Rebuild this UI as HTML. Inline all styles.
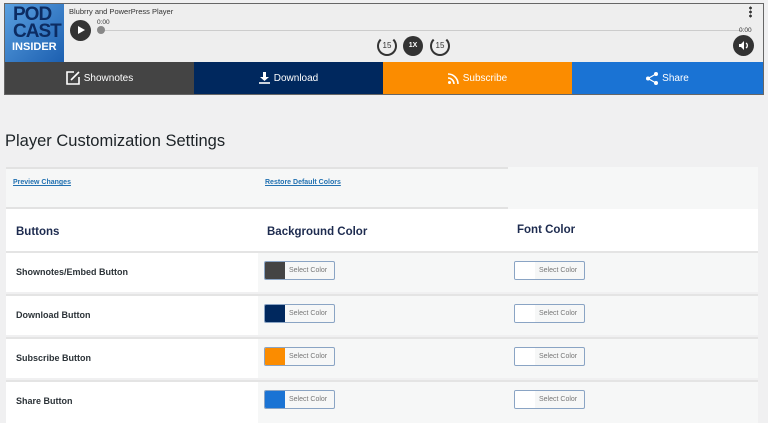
<!DOCTYPE html>
<html><head><meta charset="utf-8"><style>
*{margin:0;padding:0;box-sizing:border-box}
body{width:768px;height:421px;overflow:hidden;background:#f0f0f1;font-family:"Liberation Sans",sans-serif;position:relative;color:#1d2327}
.a{position:absolute}
.btn{position:absolute;top:62px;height:32px;color:#fff;font-size:10px;display:flex;align-items:center;justify-content:center;gap:4px}
.row{position:absolute;left:6px;width:752px;height:41px;background:#f6f7f7;border-top:2px solid #e4e4e4}
.row .l{position:absolute;left:0;top:0;width:252px;height:100%;background:#fff}
.row .t{position:absolute;left:10px;top:14px;font-size:9px;font-weight:bold;color:#2c3338}
.sw{position:absolute;top:8px;width:71px;height:19px;border:1px solid #8aa4c4;border-radius:2px;background:#f6f7f7;font-size:7px;color:#777;overflow:hidden}
.sw i{position:absolute;left:0;top:0;width:20px;height:100%}
.sw span{position:absolute;left:24px;top:5px}
</style></head><body>
<div class="a" style="left:4px;top:3px;width:760px;height:92px;border:1px solid #666;background:#eeeeee"></div>
<div class="a" style="left:5px;top:4px;width:59px;height:58px;background:#2a6fc4;overflow:hidden">
<div class="a" style="left:0;top:0;width:59px;height:58px;background:linear-gradient(135deg,#5aa0e0,#1c5fb0)"></div>
<div class="a" style="left:8px;top:2px;font-size:19px;font-weight:bold;color:#0c2c62;line-height:17px;letter-spacing:-1px">POD<br>CAST</div>
<div class="a" style="left:7px;top:37px;font-size:11px;font-weight:bold;color:#fff">INSIDER</div>
</div>
<div class="a" style="left:69px;top:7px;font-size:7.5px;color:#333">Blubrry and PowerPress Player</div>
<div class="a" style="left:70px;top:20px;width:21px;height:21px;border-radius:50%;background:#333"></div>
<div class="a" style="left:78px;top:26px;width:0;height:0;border-left:7px solid #fff;border-top:4.5px solid transparent;border-bottom:4.5px solid transparent"></div>
<div class="a" style="left:97px;top:19px;font-size:6.5px;color:#333">0:00</div>
<div class="a" style="left:101px;top:30px;width:642px;height:1px;background:#ccc"></div>
<div class="a" style="left:97px;top:26px;width:8px;height:8px;border-radius:50%;background:#888"></div>
<div class="a" style="left:739px;top:27px;font-size:6.5px;color:#333">0:00</div>
<div class="a" style="left:749px;top:6px;width:3px;height:12px;background:radial-gradient(circle,#333 1.3px,transparent 1.5px) 0 0/3px 4px"></div>
<div class="a" style="left:733px;top:35px;width:21px;height:21px;border-radius:50%;background:#333"></div>
<svg class="a" style="left:737px;top:39px" width="13" height="13" viewBox="0 0 13 13"><path d="M2 5h2l3-3v9L4 8H2z" fill="#fff"/><path d="M9 4a3 3 0 0 1 0 5" stroke="#fff" fill="none" stroke-width="1.3"/></svg>
<div class="a" style="left:377px;top:36px;width:20px;height:20px;border:2px solid #333;border-top-color:transparent;border-radius:50%;font-size:8px;text-align:center;line-height:16px;color:#333">15</div>
<div class="a" style="left:403px;top:36px;width:20px;height:20px;border-radius:50%;background:#333;color:#fff;font-size:7px;font-weight:bold;text-align:center;line-height:20px">1X</div>
<div class="a" style="left:430px;top:36px;width:20px;height:20px;border:2px solid #333;border-top-color:transparent;border-radius:50%;font-size:8px;text-align:center;line-height:16px;color:#333">15</div>
<div class="btn" style="left:5px;width:189px;background:#444"><svg width="14" height="14" viewBox="0 0 14 14"><path d="M8 1H1v12h12V6" stroke="#fff" stroke-width="1.6" fill="none"/><path d="M5 9l8-8" stroke="#fff" stroke-width="1.6"/></svg>Shownotes</div>
<div class="btn" style="left:194px;width:189px;background:#00285e"><svg width="11" height="12" viewBox="0 0 11 12"><path d="M4 0h3v5h3L5.5 9 1 5h3z" fill="#fff"/><path d="M0 11h11" stroke="#fff" stroke-width="1.6"/></svg>Download</div>
<div class="btn" style="left:383px;width:189px;background:#fb8c00"><svg width="11" height="11" viewBox="0 0 11 11"><circle cx="1.5" cy="9.5" r="1.5" fill="#fff"/><path d="M0 5a6 6 0 0 1 6 6M0 1a10 10 0 0 1 10 10" stroke="#fff" stroke-width="1.6" fill="none"/></svg>Subscribe</div>
<div class="btn" style="left:572px;width:191px;background:#1a73d4"><svg width="12" height="13" viewBox="0 0 12 13"><circle cx="10" cy="2" r="2" fill="#fff"/><circle cx="2" cy="6.5" r="2" fill="#fff"/><circle cx="10" cy="11" r="2" fill="#fff"/><path d="M10 2L2 6.5 10 11" stroke="#fff" stroke-width="1.2" fill="none"/></svg>Share</div>

<div class="a" style="left:5px;top:132px;font-size:16.5px;color:#1d2327">Player Customization Settings</div>
<div class="a" style="left:6px;top:167px;width:502px;height:42px;background:#f6f7f7;border-top:2px solid #e2e2e2;border-bottom:2px solid #e2e2e2"></div>
<div class="a" style="left:508px;top:167px;width:250px;height:42px;background:#f6f7f7"></div>
<div class="a" style="left:13px;top:179px;font-size:7px;font-weight:bold;color:#2271b1;text-decoration:underline">Preview Changes</div>
<div class="a" style="left:265px;top:179px;font-size:7px;font-weight:bold;color:#2271b1;text-decoration:underline">Restore Default Colors</div>
<div class="a" style="left:6px;top:209px;width:752px;height:43px;background:#fff"></div>
<div class="a" style="left:16px;top:226px;font-size:11.5px;font-weight:bold;color:#1d2b4f">Buttons</div>
<div class="a" style="left:267px;top:226px;font-size:11.5px;font-weight:bold;color:#1d2b4f">Background Color</div>
<div class="a" style="left:517px;top:224px;font-size:11.5px;font-weight:bold;color:#1d2b4f">Font Color</div>

<div class="row" style="top:251px"><div class="l"></div><div class="t">Shownotes/Embed Button</div>
<div class="sw" style="left:258px"><i style="background:#444"></i><span>Select Color</span></div>
<div class="sw" style="left:508px"><i style="background:#fff"></i><span>Select Color</span></div></div>
<div class="row" style="top:294px"><div class="l"></div><div class="t">Download Button</div>
<div class="sw" style="left:258px"><i style="background:#00285e"></i><span>Select Color</span></div>
<div class="sw" style="left:508px"><i style="background:#fff"></i><span>Select Color</span></div></div>
<div class="row" style="top:337px"><div class="l"></div><div class="t">Subscribe Button</div>
<div class="sw" style="left:258px"><i style="background:#fb8c00"></i><span>Select Color</span></div>
<div class="sw" style="left:508px"><i style="background:#fff"></i><span>Select Color</span></div></div>
<div class="row" style="top:380px;height:43px"><div class="l"></div><div class="t">Share Button</div>
<div class="sw" style="left:258px"><i style="background:#1a73d4"></i><span>Select Color</span></div>
<div class="sw" style="left:508px"><i style="background:#fff"></i><span>Select Color</span></div></div>
</body></html>
